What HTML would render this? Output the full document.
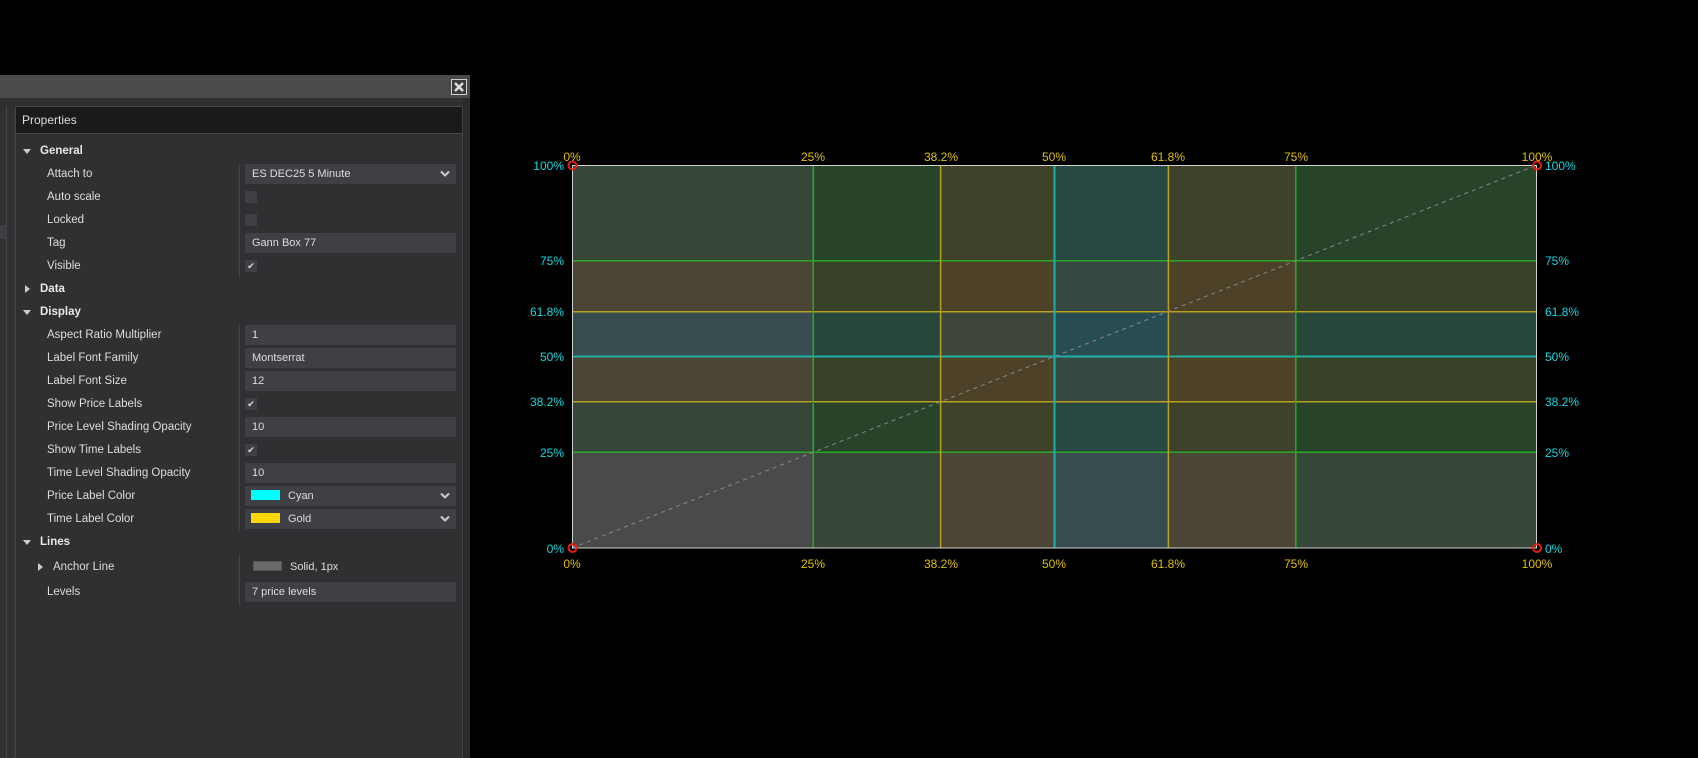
<!DOCTYPE html>
<html><head><meta charset="utf-8"><style>
*{margin:0;padding:0;box-sizing:border-box}
html,body{width:1698px;height:758px;overflow:hidden}
body{background:#000;position:relative;font-family:"Segoe UI","Liberation Sans",sans-serif}
.panel{position:absolute;left:0;top:75px;width:470px;height:683px;background:#303032;overflow:hidden}
.title{position:absolute;left:0;top:0;width:470px;height:23px;background:#4a4a4a}
.close{position:absolute;left:451px;top:4px;width:16px;height:16px;border:1px solid #cfcfcf;background:#3c3c3c}
.rstrip{position:absolute;left:463px;top:23px;width:7px;height:660px;background:#2a2a2c}
.lstrip{position:absolute;left:0;top:31px;width:7px;height:652px;border-right:1px solid #444}
.props{position:absolute;left:15px;top:31px;width:448px;height:652px;border:1px solid #444;border-bottom:none}
.hdr{position:absolute;left:0;top:0;width:446px;height:27px;background:#1a1a1b;border-bottom:1px solid #444;color:#ddd;font-size:12px;line-height:26px;padding-left:6px}
.r{position:absolute;left:0;width:446px;height:23px;font-size:11.5px;color:#ddd;line-height:23px}
.r .l{position:absolute;left:31px}
.r.g .l{left:24px;font-weight:bold;color:#e8e8e8}
.tri{position:absolute;left:7px;top:9px;width:0;height:0;border-left:4px solid transparent;border-right:4px solid transparent;border-top:5px solid #ccc}
.trr{position:absolute;left:9px;top:7px;width:0;height:0;border-top:4px solid transparent;border-bottom:4px solid transparent;border-left:5px solid #ccc}
.v{position:absolute;left:229px;top:1px;width:211px;height:20px;background:#3f3f46;line-height:20px;padding-left:7px;font-size:11px}
.cb{position:absolute;left:229px;top:5px;width:12px;height:12px;background:#3f3f46;color:#ddd;font-size:9px;line-height:12px;text-align:center}
.dv{position:absolute;left:223px;width:1px;background:#444}
.chev{position:absolute;right:6px;top:6px}
.sw{display:inline-block;width:29px;height:10px;vertical-align:-1px;margin-right:8px;margin-left:-1px}
</style></head><body>
<div class="panel">
 <div class="title"><div class="close"><svg width="14" height="14" viewBox="0 0 14 14"><path d="M3 3L11 11M11 3L3 11" stroke="#ddd" stroke-width="2.6"/></svg></div></div>
 <div class="rstrip"></div>
 <div class="lstrip"><div style="position:absolute;left:0;top:119px;width:7px;height:14px;background:#3e3e42"></div></div>
 <div class="props">
  <div class="hdr">Properties</div>
  <div class="dv" style="top:58px;height:112px"></div>
  <div class="dv" style="top:218px;height:205px"></div>
  <div class="dv" style="top:448px;height:50px"></div>
  <div class="r g" style="top:33px"><div class="tri"></div><span class="l">General</span></div>
  <div class="r" style="top:56px"><span class="l">Attach to</span><div class="v">ES DEC25 5 Minute<svg class="chev" width="10" height="8" viewBox="0 0 10 8"><path d="M1 1.5L5 5.5L9 1.5" stroke="#ccc" stroke-width="2" fill="none"/></svg></div></div>
  <div class="r" style="top:79px"><span class="l">Auto scale</span><div class="cb"></div></div>
  <div class="r" style="top:102px"><span class="l">Locked</span><div class="cb"></div></div>
  <div class="r" style="top:125px"><span class="l">Tag</span><div class="v">Gann Box 77</div></div>
  <div class="r" style="top:148px"><span class="l">Visible</span><div class="cb">&#10004;</div></div>
  <div class="r g" style="top:171px"><div class="trr"></div><span class="l">Data</span></div>
  <div class="r g" style="top:194px"><div class="tri"></div><span class="l">Display</span></div>
  <div class="r" style="top:217px"><span class="l">Aspect Ratio Multiplier</span><div class="v">1</div></div>
  <div class="r" style="top:240px"><span class="l">Label Font Family</span><div class="v">Montserrat</div></div>
  <div class="r" style="top:263px"><span class="l">Label Font Size</span><div class="v">12</div></div>
  <div class="r" style="top:286px"><span class="l">Show Price Labels</span><div class="cb">&#10004;</div></div>
  <div class="r" style="top:309px"><span class="l">Price Level Shading Opacity</span><div class="v">10</div></div>
  <div class="r" style="top:332px"><span class="l">Show Time Labels</span><div class="cb">&#10004;</div></div>
  <div class="r" style="top:355px"><span class="l">Time Level Shading Opacity</span><div class="v">10</div></div>
  <div class="r" style="top:378px"><span class="l">Price Label Color</span><div class="v"><span class="sw" style="background:#00ffff"></span>Cyan<svg class="chev" width="10" height="8" viewBox="0 0 10 8"><path d="M1 1.5L5 5.5L9 1.5" stroke="#ccc" stroke-width="2" fill="none"/></svg></div></div>
  <div class="r" style="top:401px"><span class="l">Time Label Color</span><div class="v"><span class="sw" style="background:#ffd700"></span>Gold<svg class="chev" width="10" height="8" viewBox="0 0 10 8"><path d="M1 1.5L5 5.5L9 1.5" stroke="#ccc" stroke-width="2" fill="none"/></svg></div></div>
  <div class="r g" style="top:424px"><div class="tri"></div><span class="l">Lines</span></div>
  <div class="r" style="top:449px"><div class="trr" style="left:22px"></div><span class="l" style="left:37px">Anchor Line</span><div class="v" style="background:none;padding-left:9px"><span class="sw" style="background:#6a6a6a;border:1px solid #555"></span>Solid, 1px</div></div>
  <div class="r" style="top:474px"><span class="l">Levels</span><div class="v">7 price levels</div></div>
 </div>
</div>
<svg style="position:absolute;left:0;top:0" width="1698" height="758" font-family="Liberation Sans, sans-serif" font-size="12">
 <rect x="572" y="165" width="965" height="383" fill="#4a4a4a"/>
 <g fill-opacity="0.27">
  <rect x="572" y="401.7" width="965" height="50.5" fill="#003a08"/>
  <rect x="572" y="165" width="965" height="95.8" fill="#003a08"/>
  <rect x="572" y="356.5" width="965" height="45.2" fill="#503800"/>
  <rect x="572" y="260.8" width="965" height="50.9" fill="#503800"/>
  <rect x="572" y="311.7" width="965" height="44.8" fill="#00525e"/>
  <rect x="813.3" y="165" width="127.3" height="383" fill="#003a08"/>
  <rect x="1295.8" y="165" width="241.2" height="383" fill="#003a08"/>
  <rect x="940.6" y="165" width="113.9" height="383" fill="#503800"/>
  <rect x="1168.4" y="165" width="127.4" height="383" fill="#503800"/>
  <rect x="1054.5" y="165" width="113.9" height="383" fill="#00525e"/>
 </g>
 <g stroke-width="1.5">
  <line x1="572" x2="1537" y1="260.8" y2="260.8" stroke="#2aa82a"/>
  <line x1="572" x2="1537" y1="452.2" y2="452.2" stroke="#2aa82a"/>
  <line x1="572" x2="1537" y1="311.7" y2="311.7" stroke="#b8a020"/>
  <line x1="572" x2="1537" y1="401.7" y2="401.7" stroke="#b8a020"/>
  <line x1="572" x2="1537" y1="356.5" y2="356.5" stroke="#1fb0a8" stroke-width="2"/>
  <line y1="165" y2="548" x1="813.3" x2="813.3" stroke="#2aa82a"/>
  <line y1="165" y2="548" x1="1295.8" x2="1295.8" stroke="#2aa82a"/>
  <line y1="165" y2="548" x1="940.6" x2="940.6" stroke="#b8a020"/>
  <line y1="165" y2="548" x1="1168.4" x2="1168.4" stroke="#b8a020"/>
  <line y1="165" y2="548" x1="1054.5" x2="1054.5" stroke="#1fb0a8" stroke-width="2"/>
 </g>
 <line x1="572" y1="548" x2="1537" y2="165" stroke="#8a8a8a" stroke-dasharray="4 4"/>
 <rect x="572.5" y="165.5" width="964" height="382.5" fill="none" stroke="#d0d0d0"/>
 <g fill="none" stroke="#e02010" stroke-width="2">
  <circle cx="572.5" cy="165.5" r="4"/><circle cx="1537" cy="165.5" r="4"/>
  <circle cx="572.5" cy="548" r="4"/><circle cx="1537" cy="548" r="4"/>
 </g>
 <g fill="#e0c000" text-anchor="middle">
  <text x="572" y="161">0%</text><text x="813" y="161">25%</text><text x="941" y="161">38.2%</text><text x="1054" y="161">50%</text><text x="1168" y="161">61.8%</text><text x="1296" y="161">75%</text><text x="1537" y="161">100%</text>
  <text x="572" y="568">0%</text><text x="813" y="568">25%</text><text x="941" y="568">38.2%</text><text x="1054" y="568">50%</text><text x="1168" y="568">61.8%</text><text x="1296" y="568">75%</text><text x="1537" y="568">100%</text>
 </g>
 <g fill="#10d8e0" text-anchor="end">
  <text x="564" y="170">100%</text><text x="564" y="265">75%</text><text x="564" y="316">61.8%</text><text x="564" y="361">50%</text><text x="564" y="406">38.2%</text><text x="564" y="457">25%</text><text x="564" y="553">0%</text>
 </g>
 <g fill="#10d8e0">
  <text x="1545" y="170">100%</text><text x="1545" y="265">75%</text><text x="1545" y="316">61.8%</text><text x="1545" y="361">50%</text><text x="1545" y="406">38.2%</text><text x="1545" y="457">25%</text><text x="1545" y="553">0%</text>
 </g>
</svg>
</body></html>
